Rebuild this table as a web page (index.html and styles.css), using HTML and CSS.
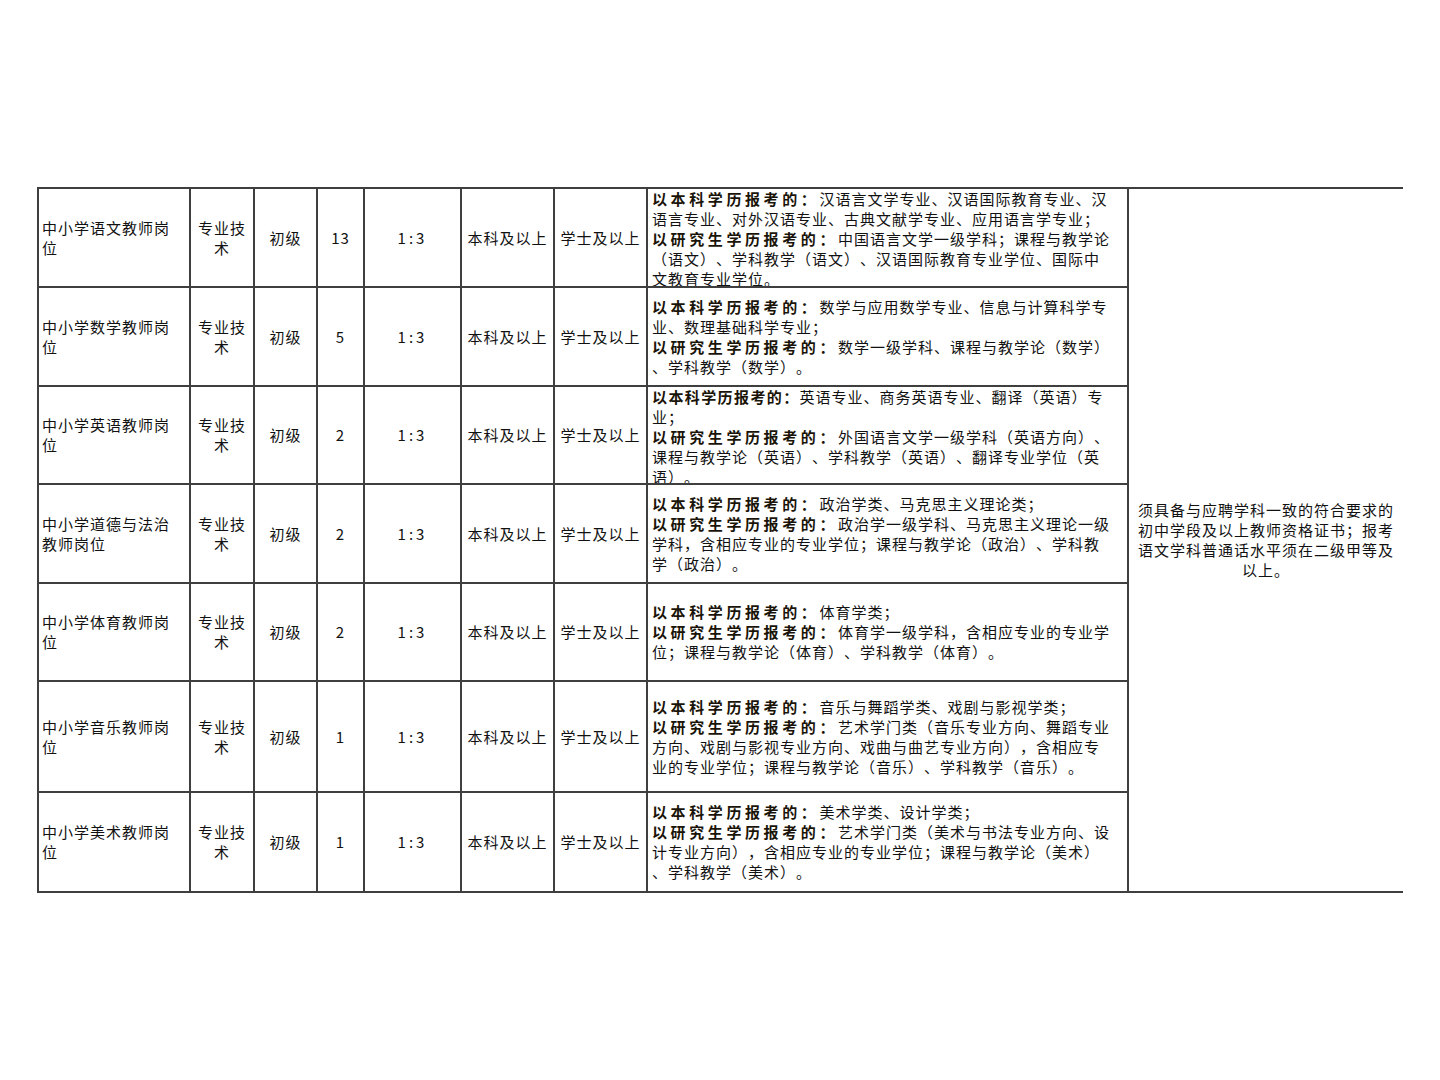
FILE: index.html
```html
<!DOCTYPE html>
<html lang="zh-CN">
<head>
<meta charset="utf-8">
<title>岗位表</title>
<link rel="stylesheet" href="styles.css">
</head>
<body>
<div class="sheet">
  <div class="cell note">须具备与应聘学科一致的符合要求的<br>初中学段及以上教师资格证书；报考<br>语文学科普通话水平须在二级甲等及<br>以上。</div>

  <div class="cell name">中小学语文教师岗位</div>
  <div class="cell c">专业技术</div>
  <div class="cell c">初级</div>
  <div class="cell c">13</div>
  <div class="cell c ratio">1:3</div>
  <div class="cell c">本科及以上</div>
  <div class="cell c">学士及以上</div>
  <div class="cell req"><div class="clip"><b class="lab">以本科学历报考的：</b>汉语言文学专业、汉语国际教育专业、汉<br>语言专业、对外汉语专业、古典文献学专业、应用语言学专业；<br><b class="lab">以研究生学历报考的：</b>中国语言文学一级学科；课程与教学论<br>（语文）、学科教学（语文）、汉语国际教育专业学位、国际中<br>文教育专业学位。</div></div>

  <div class="cell name">中小学数学教师岗位</div>
  <div class="cell c">专业技术</div>
  <div class="cell c">初级</div>
  <div class="cell c">5</div>
  <div class="cell c ratio">1:3</div>
  <div class="cell c">本科及以上</div>
  <div class="cell c">学士及以上</div>
  <div class="cell req"><div class="clip"><b class="lab">以本科学历报考的：</b>数学与应用数学专业、信息与计算科学专<br>业、数理基础科学专业；<br><b class="lab">以研究生学历报考的：</b>数学一级学科、课程与教学论（数学）<br>、学科教学（数学）。</div></div>

  <div class="cell name">中小学英语教师岗位</div>
  <div class="cell c">专业技术</div>
  <div class="cell c">初级</div>
  <div class="cell c">2</div>
  <div class="cell c ratio">1:3</div>
  <div class="cell c">本科及以上</div>
  <div class="cell c">学士及以上</div>
  <div class="cell req"><div class="clip"><b class="lab plain">以本科学历报考的：</b>英语专业、商务英语专业、翻译（英语）专<br>业；<br><b class="lab">以研究生学历报考的：</b>外国语言文学一级学科（英语方向）、<br>课程与教学论（英语）、学科教学（英语）、翻译专业学位（英<br>语）。</div></div>

  <div class="cell name">中小学道德与法治教师岗位</div>
  <div class="cell c">专业技术</div>
  <div class="cell c">初级</div>
  <div class="cell c">2</div>
  <div class="cell c ratio">1:3</div>
  <div class="cell c">本科及以上</div>
  <div class="cell c">学士及以上</div>
  <div class="cell req"><div class="clip"><b class="lab">以本科学历报考的：</b>政治学类、马克思主义理论类；<br><b class="lab">以研究生学历报考的：</b>政治学一级学科、马克思主义理论一级<br>学科，含相应专业的专业学位；课程与教学论（政治）、学科教<br>学（政治）。</div></div>

  <div class="cell name">中小学体育教师岗位</div>
  <div class="cell c">专业技术</div>
  <div class="cell c">初级</div>
  <div class="cell c">2</div>
  <div class="cell c ratio">1:3</div>
  <div class="cell c">本科及以上</div>
  <div class="cell c">学士及以上</div>
  <div class="cell req"><div class="clip"><b class="lab">以本科学历报考的：</b>体育学类；<br><b class="lab">以研究生学历报考的：</b>体育学一级学科，含相应专业的专业学<br>位；课程与教学论（体育）、学科教学（体育）。</div></div>

  <div class="cell name">中小学音乐教师岗位</div>
  <div class="cell c">专业技术</div>
  <div class="cell c">初级</div>
  <div class="cell c">1</div>
  <div class="cell c ratio">1:3</div>
  <div class="cell c">本科及以上</div>
  <div class="cell c">学士及以上</div>
  <div class="cell req"><div class="clip"><b class="lab">以本科学历报考的：</b>音乐与舞蹈学类、戏剧与影视学类；<br><b class="lab">以研究生学历报考的：</b>艺术学门类（音乐专业方向、舞蹈专业<br>方向、戏剧与影视专业方向、戏曲与曲艺专业方向），含相应专<br>业的专业学位；课程与教学论（音乐）、学科教学（音乐）。</div></div>

  <div class="cell name">中小学美术教师岗位</div>
  <div class="cell c">专业技术</div>
  <div class="cell c">初级</div>
  <div class="cell c">1</div>
  <div class="cell c ratio">1:3</div>
  <div class="cell c">本科及以上</div>
  <div class="cell c">学士及以上</div>
  <div class="cell req"><div class="clip"><b class="lab">以本科学历报考的：</b>美术学类、设计学类；<br><b class="lab">以研究生学历报考的：</b>艺术学门类（美术与书法专业方向、设<br>计专业方向），含相应专业的专业学位；课程与教学论（美术）<br>、学科教学（美术）。</div></div>
</div>
</body>
</html>
```

FILE: styles.css
```css
html, body {
  margin: 0;
  padding: 0;
  background: #ffffff;
}

body {
  font-family: "Noto Sans CJK SC", "Noto Sans", sans-serif;
  font-size: 15px;
  letter-spacing: 1px;
  line-height: 20px;
  color: #111111;
  text-spacing-trim: space-all;
  font-feature-settings: "halt" 0, "chws" 0;
}

.sheet {
  margin: 187px 0 0 37px;
  width: 1366px;
  display: grid;
  grid-template-columns: 150px 62px 61px 45px 95px 91px 91px 479px 274px;
  grid-template-rows: 97px 97px 96px 97px 96px 109px 98px;
  gap: 2px;
  padding: 2px 0 2px 2px;
  background: #3f3f3f;
  box-sizing: border-box;
}

.cell {
  background: #ffffff;
  display: flex;
  align-items: center;
  overflow: hidden;
}

.name {
  padding: 0 14px 0 3px;
}

.c {
  justify-content: center;
  text-align: center;
  padding: 0 5px;
}

.ratio {
  letter-spacing: 3px;
}

.req {
  padding: 0 0 0 4px;
  align-items: center;
}

.clip {
  max-height: 97px;
  overflow: hidden;
  white-space: nowrap;
}

.lab {
  font-weight: 700;
  letter-spacing: 3.6px;
  color: #1a1408;
}

.lab.plain {
  letter-spacing: 1.4px;
}

.note {
  grid-column: 9;
  grid-row: 1 / span 7;
  justify-content: center;
  text-align: center;
  padding: 0 4px;
}
```
